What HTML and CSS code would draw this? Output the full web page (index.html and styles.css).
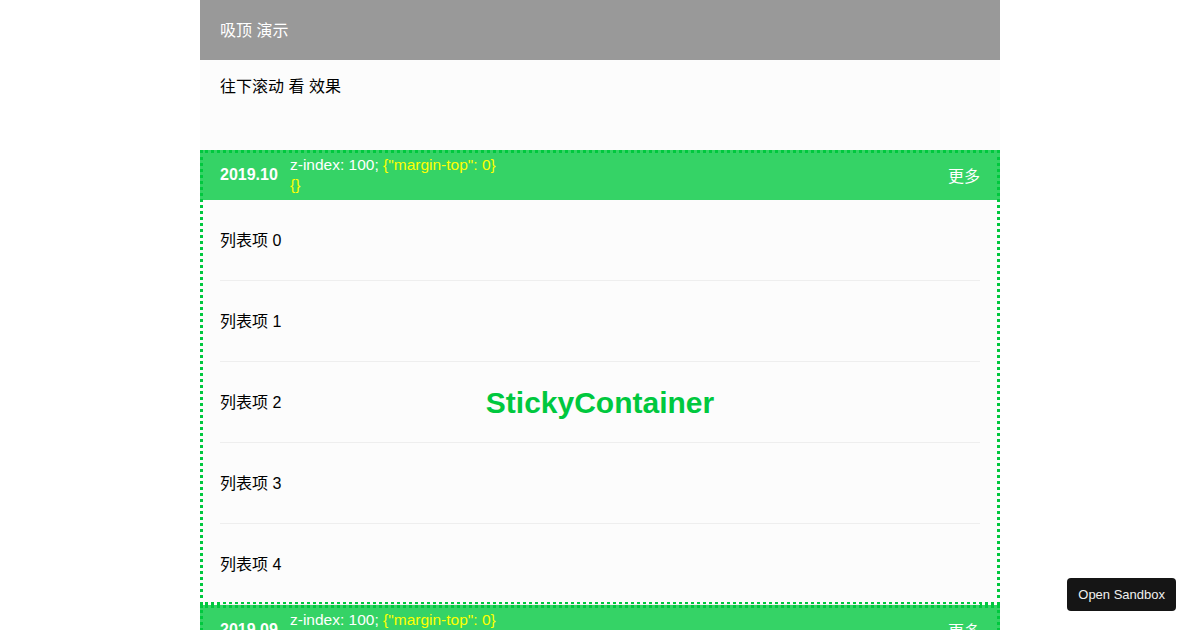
FILE: index.html
```html
<!DOCTYPE html>
<html lang="zh-CN">
<head>
<meta charset="utf-8">
<title>Sticky</title>
<link rel="stylesheet" href="styles.css">
</head>
<body>
<div class="page">
  <header class="topbar">吸顶 演示</header>
  <section class="intro">往下滚动 看 效果</section>

  <div class="sticky-container">
    <div class="group-head">
      <span class="date">2019.10</span>
      <span class="info">z-index: 100; <span class="hl">{"margin-top": 0} {}</span></span>
      <span class="more">更多</span>
    </div>
    <div class="items">
      <div class="item">列表项 0</div>
      <div class="item">列表项 1</div>
      <div class="item">列表项 2</div>
      <div class="item">列表项 3</div>
      <div class="item">列表项 4</div>
      <div class="label">StickyContainer</div>
    </div>
  </div>

  <div class="sticky-container">
    <div class="group-head">
      <span class="date">2019.09</span>
      <span class="info">z-index: 100; <span class="hl">{"margin-top": 0} {}</span></span>
      <span class="more">更多</span>
    </div>
    <div class="items">
      <div class="item">列表项 0</div>
      <div class="item">列表项 1</div>
    </div>
  </div>
</div>
<button class="sandbox">Open Sandbox</button>
</body>
</html>
```

FILE: styles.css
```css
html, body {
  margin: 0;
  padding: 0;
  background: #ffffff;
  font-family: "Liberation Sans", Arial, "Noto Sans CJK SC", sans-serif;
  font-size: 16px;
  color: #000;
  overflow: hidden;
  height: 630px;
}

.page {
  width: 800px;
  margin: 0 auto;
  background: #fcfcfc;
}

.topbar {
  height: 60px;
  box-sizing: border-box;
  background: #999999;
  color: #fff;
  display: flex;
  align-items: center;
  padding: 0 20px 2px;
  font-size: 16px;
}

.intro {
  height: 90px;
  box-sizing: border-box;
  padding: 17px 20px;
  line-height: 20px;
}

.sticky-container {
  outline: 3px dotted #00c83e;
  outline-offset: -3px;
}

.group-head {
  height: 50px;
  box-sizing: border-box;
  background: #35d366;
  color: #fff;
  display: flex;
  align-items: center;
  padding: 0 20px;
}

.date {
  font-weight: bold;
  width: 70px;
  flex: none;
}

.info {
  width: 215px;
  line-height: 20px;
  font-size: 15.5px;
}

.hl {
  color: #ffff00;
}

.more {
  margin-left: auto;
}

.items {
  position: relative;
}

.item {
  height: 78px;
  margin: 0 20px;
  padding-bottom: 2px;
  display: flex;
  align-items: center;
  border-bottom: 1px solid #eeeeee;
}

.item:last-of-type {
  border-bottom: none;
}

.label {
  position: absolute;
  left: 0;
  right: 0;
  top: 50%;
  transform: translateY(-50%);
  text-align: center;
  font-size: 30px;
  font-weight: bold;
  color: #00c83e;
  pointer-events: none;
}

.sandbox {
  position: fixed;
  right: 24px;
  bottom: 19px;
  height: 33px;
  padding: 0 11px;
  background: #151515;
  color: #f0f0f0;
  border: none;
  border-radius: 4px;
  font-family: "Liberation Sans", Arial, sans-serif;
  font-size: 13px;
}
```
